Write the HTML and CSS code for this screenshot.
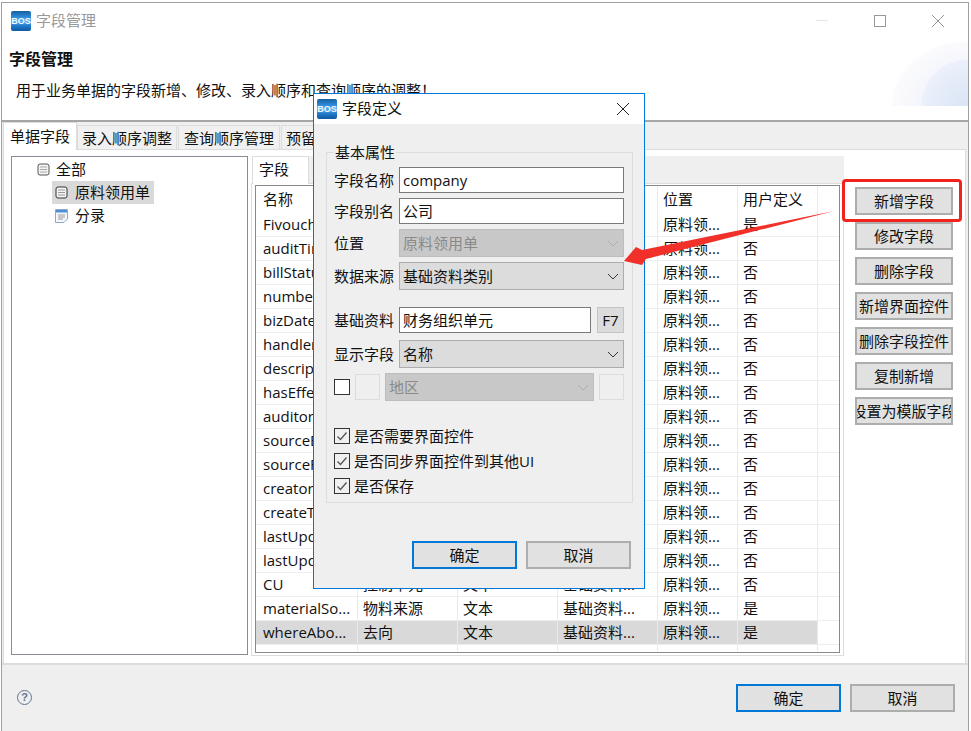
FILE: index.html
```html
<!DOCTYPE html>
<html lang="zh">
<head>
<meta charset="utf-8">
<title>字段管理</title>
<link rel="stylesheet" href="styles.css">
</head>
<body>
<div class="window">
  <div class="titlebar">
    <span class="logo">BOS</span>
    <span class="title-text">字段管理</span>
    <div class="controls">
      <svg width="12" height="12" viewBox="0 0 12 12"><path d="M0 5.5H12" stroke="#e6e6e6" fill="none"/></svg>
      <svg width="12" height="12" viewBox="0 0 12 12"><rect x=".5" y=".5" width="11" height="11" fill="none" stroke="#999"/></svg>
      <svg width="12" height="12" viewBox="0 0 12 12"><path d="M0 0L12 12M12 0L0 12" stroke="#999" fill="none"/></svg>
    </div>
  </div>
  <div class="header">
    <div class="header-title">字段管理</div>
    <div class="header-desc">用于业务单据的字段新增、修改、录入顺序和查询顺序的调整！</div>
  </div>
  <div class="main">
    <div class="tabs">
      <div class="tab active">单据字段</div>
      <div class="tab t1">录入顺序调整</div>
      <div class="tab t2">查询顺序管理</div>
      <div class="tab t3">预留字段管理</div>
    </div>
    <div class="panel">
      <div class="tree">
        <div class="node n0">
          <svg class="ico" width="13" height="13" viewBox="0 0 13 13"><rect x="1" y="1" width="11" height="11" rx="2" fill="#f4f4f4" stroke="#555"/><path d="M3 4H10M3 6.5H10M3 9H10" stroke="#aaa"/></svg>
          <span>全部</span>
        </div>
        <div class="node n1">
          <svg class="ico" width="13" height="13" viewBox="0 0 13 13"><rect x="1" y="1" width="11" height="11" rx="2" fill="#f4f4f4" stroke="#333"/><path d="M3 4H10M3 6.5H10M3 9H10" stroke="#999"/></svg>
          <span>原料领用单</span>
        </div>
        <div class="node n2">
          <svg class="ico" width="13" height="14" viewBox="0 0 13 14"><path d="M.5 .5H12.5V10L9 13.5H.5Z" fill="#f3f6fb" stroke="#8fa6c8"/><rect x="1" y="1" width="11" height="2.5" fill="#4f8fd8"/><path d="M3 6H10M3 8H10M3 10H8" stroke="#9a9a9a"/></svg>
          <span>分录</span>
        </div>
      </div>
      <div class="fields">
        <div class="field-tabs"><div class="field-tab">字段</div></div>
        <div class="field-frame">
          <div class="table-box">
            <table class="grid">
              <colgroup><col class="c1"><col class="c2"><col class="c2"><col class="c2"><col class="c3"><col class="c3"><col></colgroup>
              <thead><tr><th>名称</th><th>别名</th><th>类型</th><th>数据来源</th><th>位置</th><th>用户定义</th><th></th></tr></thead>
              <tbody>
                <tr><td>Fivoucher...</td><td>是否凭证</td><td>文本</td><td>自定义</td><td>原料领...</td><td>是</td><td></td></tr>
                <tr><td>auditTime</td><td>审核时间</td><td>日期</td><td>自定义</td><td>原料领...</td><td>否</td><td></td></tr>
                <tr><td>billStatus</td><td>单据状态</td><td>整数</td><td>枚举</td><td>原料领...</td><td>否</td><td></td></tr>
                <tr><td>number</td><td>单据编号</td><td>文本</td><td>自定义</td><td>原料领...</td><td>否</td><td></td></tr>
                <tr><td>bizDate</td><td>业务日期</td><td>日期</td><td>自定义</td><td>原料领...</td><td>否</td><td></td></tr>
                <tr><td>handler</td><td>经手人</td><td>文本</td><td>基础资料...</td><td>原料领...</td><td>否</td><td></td></tr>
                <tr><td>description</td><td>备注</td><td>文本</td><td>自定义</td><td>原料领...</td><td>否</td><td></td></tr>
                <tr><td>hasEffected</td><td>是否生效</td><td>布尔</td><td>自定义</td><td>原料领...</td><td>否</td><td></td></tr>
                <tr><td>auditor</td><td>审核人</td><td>文本</td><td>基础资料...</td><td>原料领...</td><td>否</td><td></td></tr>
                <tr><td>sourceBillId</td><td>来源单据</td><td>文本</td><td>自定义</td><td>原料领...</td><td>否</td><td></td></tr>
                <tr><td>sourceFunc</td><td>来源功能</td><td>文本</td><td>自定义</td><td>原料领...</td><td>否</td><td></td></tr>
                <tr><td>creator</td><td>创建者</td><td>文本</td><td>基础资料...</td><td>原料领...</td><td>否</td><td></td></tr>
                <tr><td>createTime</td><td>创建时间</td><td>日期</td><td>自定义</td><td>原料领...</td><td>否</td><td></td></tr>
                <tr><td>lastUpdateU</td><td>修改者</td><td>文本</td><td>基础资料...</td><td>原料领...</td><td>否</td><td></td></tr>
                <tr><td>lastUpdateT</td><td>修改时间</td><td>日期</td><td>自定义</td><td>原料领...</td><td>否</td><td></td></tr>
                <tr><td>CU</td><td>控制单元</td><td>文本</td><td>基础资料...</td><td>原料领...</td><td>否</td><td></td></tr>
                <tr><td>materialSo...</td><td>物料来源</td><td>文本</td><td>基础资料...</td><td>原料领...</td><td>是</td><td></td></tr>
                <tr class="sel"><td>whereAbo...</td><td>去向</td><td>文本</td><td>基础资料...</td><td>原料领...</td><td>是</td><td class="nosel"></td></tr>
                <tr class="stub"><td></td><td></td><td></td><td></td><td></td><td></td><td></td></tr>
              </tbody>
            </table>
          </div>
        </div>
      </div>
      <div class="actions">
        <button class="btn side">新增字段</button>
        <button class="btn side">修改字段</button>
        <button class="btn side">删除字段</button>
        <button class="btn side">新增界面控件</button>
        <button class="btn side">删除字段控件</button>
        <button class="btn side">复制新增</button>
        <button class="btn side clip"><span>设置为模版字段</span></button>
      </div>
    </div>
  </div>
  <div class="footer">
    <span class="help">?</span>
    <div class="footer-btns">
      <button class="btn wide primary">确定</button>
      <button class="btn wide">取消</button>
    </div>
  </div>
</div>

<div class="dialog">
  <div class="dlg-title">
    <span class="logo">BOS</span>
    <span class="dlg-title-text">字段定义</span>
    <svg class="dlg-close" width="12" height="12" viewBox="0 0 12 12"><path d="M0 0L12 12M12 0L0 12" stroke="#222" fill="none"/></svg>
  </div>
  <div class="dlg-body">
    <fieldset class="group">
      <legend>基本属性</legend>
      <div class="row r-a"><label>字段名称</label><div class="input grow">company</div></div>
      <div class="row r-a"><label>字段别名</label><div class="input grow">公司</div></div>
      <div class="row r-a"><label>位置</label>
        <div class="select grow disabled"><span>原料领用单</span><svg width="12" height="7" viewBox="0 0 12 7"><path d="M1 1L6 6L11 1" fill="none" stroke="#aeaeae"/></svg></div>
      </div>
      <div class="row r-b"><label>数据来源</label>
        <div class="select grow"><span>基础资料类别</span><svg width="12" height="7" viewBox="0 0 12 7"><path d="M1 1L6 6L11 1" fill="none" stroke="#333"/></svg></div>
      </div>
      <div class="row r-c"><label>基础资料</label><div class="input grow">财务组织单元</div><div class="f7">F7</div></div>
      <div class="row r-a"><label>显示字段</label>
        <div class="select grow"><span>名称</span><svg width="12" height="7" viewBox="0 0 12 7"><path d="M1 1L6 6L11 1" fill="none" stroke="#333"/></svg></div>
      </div>
      <div class="row r-d">
        <span class="check plain"></span>
        <span class="blank"></span>
        <div class="select grow disabled"><span>地区</span><svg width="12" height="7" viewBox="0 0 12 7"><path d="M1 1L6 6L11 1" fill="none" stroke="#aeaeae"/></svg></div>
        <span class="blank"></span>
      </div>
      <div class="checkrow">
        <span class="check"><svg width="14" height="14" viewBox="0 0 14 14"><path d="M2.5 7.5L5.5 10.5L11.5 3.5" fill="none" stroke="#555" stroke-width="1.3"/></svg></span>
        <span>是否需要界面控件</span>
      </div>
      <div class="checkrow">
        <span class="check"><svg width="14" height="14" viewBox="0 0 14 14"><path d="M2.5 7.5L5.5 10.5L11.5 3.5" fill="none" stroke="#555" stroke-width="1.3"/></svg></span>
        <span>是否同步界面控件到其他UI</span>
      </div>
      <div class="checkrow last">
        <span class="check"><svg width="14" height="14" viewBox="0 0 14 14"><path d="M2.5 7.5L5.5 10.5L11.5 3.5" fill="none" stroke="#555" stroke-width="1.3"/></svg></span>
        <span>是否保存</span>
      </div>
    </fieldset>
    <div class="dlg-btns">
      <button class="btn wide primary">确定</button>
      <button class="btn wide">取消</button>
    </div>
  </div>
</div>

<div class="callout"></div>
<svg class="arrow" width="971" height="731" viewBox="0 0 971 731">
  <polygon points="624,261 636,247 642,250 834,211 646,259 642,265" fill="#f2302a"/>
</svg>
</body>
</html>
```
FILE: styles.css
```css
* { box-sizing: border-box; }
html, body { margin: 0; padding: 0; }
body {
  width: 971px;
  height: 731px;
  overflow: hidden;
  background: #fff;
  color: #111;
  font: 15px/20px "Open Sans", "Noto Sans CJK SC", sans-serif;
}
button { font: inherit; color: inherit; padding: 0; }

.window {
  width: 968px;
  height: 729px;
  margin: 2px 0 0 1px;
  border: 1px solid #a0a0a0;
  border-bottom: 0;
  display: flex;
  flex-direction: column;
  background: #fff;
}

.logo {
  width: 20px;
  height: 20px;
  flex: none;
  border-radius: 2px;
  background: linear-gradient(#16609f 0, #2f8ad8 30%, #59aef0 52%, #1f78c8 75%, #0f5aa0 100%);
  color: #eef8ff;
  font: bold 9px/20px "Liberation Sans", sans-serif;
  text-align: center;
}

.titlebar {
  height: 37px;
  flex: none;
  display: flex;
  align-items: center;
  padding: 0 24px 1px 9px;
}
.title-text { margin: 0 0 3px 5px; color: #999; }
.controls { margin-left: auto; display: flex; gap: 46px; }

.header {
  height: 82px;
  flex: none;
  padding: 9px 0 0 7px;
  border-bottom: 2px solid #a6a6a6;
  background:
    radial-gradient(circle 47px at 100% 100%, rgba(214, 226, 244, .8), rgba(232, 238, 250, .75) 98%, transparent 100%) no-repeat right 0 top 0 / 77px 66px,
    radial-gradient(ellipse 77px 66px at 100% 100%, #e9eefa, #f6f7fc 70%, #fbfbfd 97%, #fff 100%) no-repeat right 0 top 0 / 77px 66px,
    #fff;
}
.header-title { font-weight: 700; font-size: 16px; line-height: 20px; }
.header-desc { margin: 11px 0 0 7px; line-height: 20px; }

.main {
  height: 541px;
  flex: none;
  background: #efefef;
  padding: 0 1px 0 1px;
  display: flex;
  flex-direction: column;
}
.tabs { height: 27px; flex: none; display: flex; align-items: flex-end; position: relative; }
.tab {
  height: 24px;
  border: 1px solid #dcdcdc;
  border-bottom: 0;
  background: #f0f0f0;
  line-height: 24px;
  text-align: center;
  white-space: nowrap;
  overflow: hidden;
}
.tab.active {
  height: 28px;
  width: 74px;
  margin-bottom: -1px;
  background: #fff;
  line-height: 26px;
  position: relative;
  z-index: 1;
}
.t1 { width: 100px; }
.t2 { width: 102px; margin-left: 1px; }
.t3 { width: 120px; margin-left: 1px; text-align: left; padding-left: 4px; }

.panel {
  flex: 1;
  margin-right: 1px;
  background: #fff;
  border: 1px solid #dcdcdc;
  border-bottom: 0;
  padding: 6px 0 0 7px;
  display: flex;
}

.tree {
  width: 237px;
  height: 499px;
  flex: none;
  border: 1px solid #8a8a94;
  padding-top: 1px;
}
.node { display: flex; align-items: center; height: 23px; }
.node span { margin: 0 0 2px 7px; }
.ico { flex: none; }
.n0 { margin-left: 25px; }
.n0 span { margin-left: 6px; }
.n1 { margin-left: 40px; width: 102px; background: #d9d9d9; padding-left: 3px; }
.n2 { margin-left: 43px; }

.fields { width: 593px; height: 499px; margin-left: 3px; flex: none; display: flex; flex-direction: column; }
.field-tabs { height: 27px; flex: none; background: linear-gradient(to right, #fff 0, #fff 57px, #efefef 57px); }
.field-tab {
  width: 57px;
  height: 28px;
  margin-left: 1px;
  border: 1px solid #dcdcdc;
  border-bottom: 0;
  background: #fff;
  line-height: 25px;
  padding-left: 6px;
  position: relative;
}
.field-frame {
  flex: 1;
  border: 1px solid #dcdcdc;
  padding: 1px 3px 2px 3px;
  background: #fff;
}
.table-box {
  width: 585px;
  height: 468px;
  border: 1px solid #8a8a8a;
  overflow: hidden;
}
.grid { width: 583px; border-spacing: 0; table-layout: fixed; }
.c1 { width: 101px; }
.c2 { width: 100px; }
.c3 { width: 80px; }
.grid th, .grid td {
  padding: 0 0 0 5px;
  font-weight: 400;
  text-align: left;
  white-space: nowrap;
  overflow: hidden;
  border-left: 1px solid #e6eaf6;
}
.grid td:first-child, .grid th:first-child { padding-left: 7px; border-left: 0; }
.grid th { height: 27px; line-height: 27px; }
.grid td { height: 24px; line-height: 23px; border-bottom: 1px solid #eeeeee; }
.grid .sel td { background: #d9d9d9; }
.grid .sel td.nosel { background: #fff; }
.grid .stub td { height: 6px; border-bottom: 0; }

.actions {
  width: 98px;
  margin: 31px 0 0 11px;
  flex: none;
  display: flex;
  flex-direction: column;
  gap: 7px;
}

.btn {
  background: #e1e1e1;
  border: 2px solid #adadad;
  white-space: nowrap;
  text-align: center;
}
.side { height: 28px; width: 98px; line-height: 24px; overflow: hidden; }
.clip { display: flex; justify-content: center; }
.clip span { flex: none; }
.wide { width: 105px; height: 28px; line-height: 24px; }
.primary { border-color: #0078d7; }

.footer {
  flex: 1;
  border-top: 2px solid #dcdcdc;
  background: #efefef;
  display: flex;
  padding: 19px 13px 0 15px;
}
.help {
  width: 15px;
  height: 15px;
  margin-top: 6px;
  border: 1.5px solid #5f7590;
  border-radius: 50%;
  color: #5f7590;
  font: bold 11px/12px "Liberation Sans", sans-serif;
  text-align: center;
}
.footer-btns { margin-left: auto; display: flex; gap: 9px; }

.dialog {
  position: absolute;
  left: 313px;
  top: 93px;
  width: 332px;
  height: 496px;
  border: 1px solid #0078d7;
  background: #efefef;
  display: flex;
  flex-direction: column;
}
.dlg-title {
  height: 30px;
  flex: none;
  background: #fff;
  display: flex;
  align-items: center;
  padding: 0 15px 0 3px;
}
.dlg-title-text { margin: 0 0 2px 5px; }
.dlg-close { margin-left: auto; }
.dlg-body { flex: 1; padding: 20px 12px 0 12px; display: flex; flex-direction: column; }

.group {
  width: 307px;
  margin: 0;
  padding: 7px 8px 8px 7px;
  border: 1px solid #dcdcdc;
  min-width: 0;
}
.group legend { padding: 0 1px; line-height: 16px; }

.row { display: flex; align-items: center; }
.row label { width: 65px; flex: none; }
.r-a { margin-bottom: 5px; }
.r-b { margin-bottom: 17px; }
.r-c { margin-bottom: 7px; }
.r-d { margin-bottom: 27px; gap: 5px; }
.grow { flex: 1; min-width: 0; }

.input {
  height: 26px;
  border: 1px solid #7a7a7a;
  background: #fff;
  padding-left: 3px;
  line-height: 24px;
}
.select {
  height: 28px;
  border: 1px solid #adadad;
  background: #dcdcdc;
  padding: 0 4px 0 3px;
  display: flex;
  align-items: center;
  justify-content: space-between;
}
.select.disabled { background: #c8c8c8; color: #8a8a8a; border-color: #bdbdbd; }
.f7 {
  width: 27px;
  height: 26px;
  margin-left: 6px;
  flex: none;
  background: #dcdcdc;
  border: 1px solid #c4c4c4;
  text-align: center;
  line-height: 24px;
}
.check {
  width: 16px;
  height: 16px;
  flex: none;
  border: 1px solid #333;
  background: #f0f0f0;
  display: flex;
}
.check.plain { background: #fff; }
.blank { width: 25px; height: 26px; flex: none; border: 1px solid #dcdcdc; background: #efefef; }
.checkrow { display: flex; align-items: center; height: 16px; margin-bottom: 9px; gap: 4px; }
.checkrow.last { margin-bottom: 0; }

.dlg-btns { margin-top: 38px; display: flex; justify-content: flex-end; gap: 9px; padding-right: 1px; }

.callout {
  position: absolute;
  left: 842px;
  top: 179px;
  width: 120px;
  height: 43px;
  border: 3px solid #f2221c;
  border-radius: 4px;
}
.arrow { position: absolute; left: 0; top: 0; pointer-events: none; }
```
